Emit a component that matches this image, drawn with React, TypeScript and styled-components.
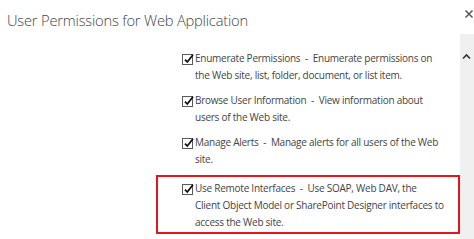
import React from "react";
import styled, { createGlobalStyle } from "styled-components";

const GlobalStyle = createGlobalStyle`
  html, body {
    margin: 0;
    padding: 0;
    background: #ffffff;
  }
  body {
    font-family: "Open Sans", "Liberation Sans", sans-serif;
    color: #444444;
  }
`;

const Dialog = styled.div`
  width: 474px;
  height: 239px;
  overflow: hidden;
  display: flex;
  flex-direction: column;
  background: #ffffff;
`;

const Header = styled.div`
  height: 34px;
  box-sizing: border-box;
  display: flex;
  align-items: flex-start;
  justify-content: space-between;
  padding: 10px 0 0 7px;
  flex-shrink: 0;
`;

const Title = styled.h1`
  margin: 0;
  font-family: "Open Sans", sans-serif;
  font-weight: 300;
  font-size: 14.7px;
  line-height: 20px;
  letter-spacing: -0.2px;
  color: #444444;
`;

const Close = styled.div`
  display: flex;
  margin-top: -1px;
`;

const Body = styled.div`
  flex: 1;
  display: flex;
  min-height: 0;
`;

const Content = styled.div`
  flex: 1;
  padding: 16px 0 0 156px;
  display: flex;
  flex-direction: column;
  gap: 8px;
`;

const Scrollbar = styled.div`
  width: 17px;
  box-sizing: border-box;
  background: #f0f0f0;
  display: flex;
  align-items: flex-start;
  padding: 19px 0 0 2px;
`;

const Item = styled.div<{ $highlight?: boolean }>`
  display: flex;
  align-items: flex-start;
  gap: 2px;
  width: 304px;
  box-sizing: border-box;
  padding: ${(p) => (p.$highlight ? "3px 0 1px 24px" : "0 0 0 26px")};
  border: ${(p) => (p.$highlight ? "2px solid #e2161c" : "none")};
  margin-top: ${(p) => (p.$highlight ? "-1px" : "0")};
`;

const Box = styled.span`
  width: 11px;
  height: 11px;
  flex-shrink: 0;
  margin-top: 4px;
  border: 1px solid #5a5a5a;
  box-sizing: border-box;
  position: relative;
`;

const Text = styled.p`
  margin: 0;
  font-family: "Open Sans", sans-serif;
  font-size: 10px;
  line-height: 17px;
  letter-spacing: -0.25px;
  color: #444444;
  width: 249px;
`;

const CheckMark = styled.svg`
  position: absolute;
  left: 0;
  top: -2px;
`;

const Check = () => (
  <CheckMark width="12" height="12" viewBox="0 0 12 12">
    <path d="M2 6.6 L4.3 9 L10 1.8" fill="none" stroke="#111" strokeWidth="1.8" />
  </CheckMark>
);

const items = [
  {
    name: "Enumerate Permissions",
    desc: "Enumerate permissions on the Web site, list, folder, document, or list item.",
  },
  { name: "Browse User Information", desc: "View information about users of the Web site." },
  { name: "Manage Alerts", desc: "Manage alerts for all users of the Web site." },
  {
    name: "Use Remote Interfaces",
    desc: "Use SOAP, Web DAV, the Client Object Model or SharePoint Designer interfaces to access the Web site.",
    highlight: true,
  },
];

export default function App() {
  return (
    <>
      <GlobalStyle />
      <Dialog>
        <Header>
          <Title>User Permissions for Web Application</Title>
          <Close>
            <svg width="10" height="10" viewBox="0 0 10 10">
              <path d="M1.5 1.5 L8.5 8.5 M8.5 1.5 L1.5 8.5" stroke="#555" strokeWidth="1.5" />
            </svg>
          </Close>
        </Header>
        <Body>
          <Content>
            {items.map((it) => (
              <Item key={it.name} $highlight={it.highlight}>
                <Box>
                  <Check />
                </Box>
                <Text>
                  {it.name}&nbsp; - &nbsp;{it.desc}
                </Text>
              </Item>
            ))}
          </Content>
          <Scrollbar>
            <svg width="9" height="7" viewBox="0 0 9 7">
              <path d="M1 5.5 L4.5 2 L8 5.5" fill="none" stroke="#333" strokeWidth="1.6" />
            </svg>
          </Scrollbar>
        </Body>
      </Dialog>
    </>
  );
}
